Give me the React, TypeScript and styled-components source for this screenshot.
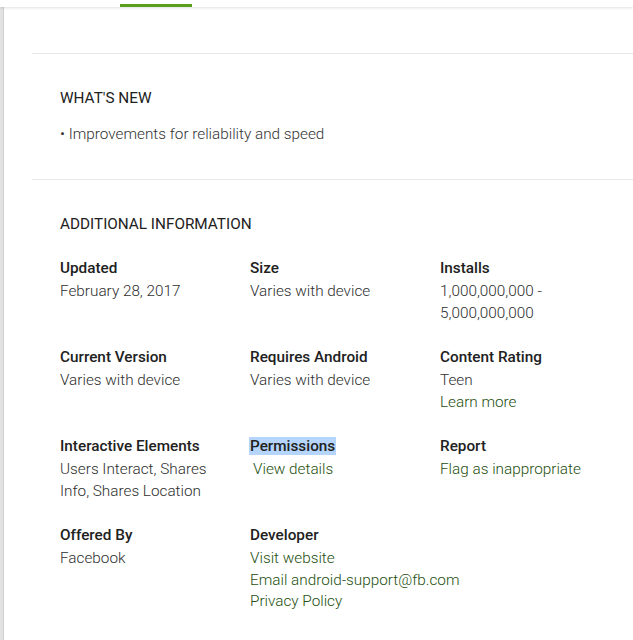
import React from "react";
import styled, { createGlobalStyle } from "styled-components";

const GlobalStyle = createGlobalStyle`
  html, body {
    margin: 0;
    padding: 0;
    background: #ffffff;
    font-family: Roboto, "Liberation Sans", Arial, sans-serif;
  }
`;

interface InfoValue {
  text: string;
  link?: boolean;
  indent?: boolean;
  nowrap?: boolean;
}

interface InfoItem {
  title: string;
  values: InfoValue[];
  highlight?: boolean;
}

const items: InfoItem[] = [
  { title: "Updated", values: [{ text: "February 28, 2017" }] },
  { title: "Size", values: [{ text: "Varies with device" }] },
  { title: "Installs", values: [{ text: "1,000,000,000 -" }, { text: "5,000,000,000" }] },
  { title: "Current Version", values: [{ text: "Varies with device" }] },
  { title: "Requires Android", values: [{ text: "Varies with device" }] },
  {
    title: "Content Rating",
    values: [{ text: "Teen" }, { text: "Learn more", link: true }],
  },
  {
    title: "Interactive Elements",
    values: [{ text: "Users Interact, Shares Info, Shares Location" }],
  },
  {
    title: "Permissions",
    highlight: true,
    values: [{ text: "View details", link: true, indent: true }],
  },
  { title: "Report", values: [{ text: "Flag as inappropriate", link: true }] },
  { title: "Offered By", values: [{ text: "Facebook" }] },
  {
    title: "Developer",
    values: [
      { text: "Visit website", link: true },
      { text: "Email android-support@fb.com", link: true, nowrap: true },
      { text: "Privacy Policy", link: true },
    ],
  },
];

const Page = styled.div`
  width: 633px;
  height: 640px;
  overflow: hidden;
  display: flex;
  flex-direction: column;
`;

const TopBar = styled.div`
  height: 7px;
  background: #ffffff;
  position: relative;
  z-index: 1;
  box-shadow: 0 1px 3px rgba(0, 0, 0, 0.12);
  display: flex;
  align-items: flex-end;
  padding-left: 120px;
  flex-shrink: 0;
`;

const TabIndicator = styled.div`
  width: 72px;
  height: 3px;
  background: #5a9e1d;
`;

const Body = styled.div`
  flex: 1;
  display: flex;
`;

const LeftRail = styled.div`
  width: 3px;
  background: #e2e2e2;
  border-right: 1px solid #cfcfcf;
  flex-shrink: 0;
`;

const Content = styled.div`
  flex: 1;
  padding-left: 28px;
`;

const Spacer = styled.div`
  height: 46px;
`;

const Section = styled.section<{ $top: number; $bottom: number }>`
  border-top: 1px solid #e8e8e8;
  padding: ${(p) => p.$top}px 0 ${(p) => p.$bottom}px 28px;
`;

const SectionTitle = styled.h2`
  margin: 0;
  font-size: 15.3px;
  font-weight: 400;
  line-height: 24px;
  color: #212121;
  text-transform: uppercase;
`;

const Bullet = styled.p`
  margin: 12px 0 0;
  font-size: 15.3px;
  font-weight: 300;
  line-height: 24px;
  color: #333333;
`;

const Grid = styled.div`
  margin-top: 20px;
  display: grid;
  grid-template-columns: repeat(3, 190px);
  row-gap: 21px;
`;

const Item = styled.div`
  display: flex;
  flex-direction: column;
  padding-right: 24px;
`;

const ItemTitle = styled.div`
  font-size: 15.3px;
  font-weight: 500;
  line-height: 24px;
  color: #212121;
`;

const Highlight = styled.span`
  background: #b5d5fc;
  padding: 0 1px;
  margin-left: -1px;
`;

const Values = styled.div`
  padding-top: 1px;
  display: flex;
  flex-direction: column;
`;

const ItemValue = styled.div<{ $link?: boolean; $indent?: boolean; $nowrap?: boolean }>`
  font-size: 15.3px;
  font-weight: 300;
  line-height: 21.5px;
  color: ${(p) => (p.$link ? "#244f10" : "#2e2e2e")};
  padding-left: ${(p) => (p.$indent ? "3px" : "0")};
  white-space: ${(p) => (p.$nowrap ? "nowrap" : "normal")};
`;

export default function App() {
  return (
    <Page>
      <GlobalStyle />
      <TopBar>
        <TabIndicator />
      </TopBar>
      <Body>
        <LeftRail />
        <Content>
          <Spacer />
          <Section $top={32} $bottom={33}>
            <SectionTitle>What's New</SectionTitle>
            <Bullet>• Improvements for reliability and speed</Bullet>
          </Section>
          <Section $top={32} $bottom={0}>
            <SectionTitle>Additional Information</SectionTitle>
            <Grid>
              {items.map((item) => (
                <Item key={item.title}>
                  <ItemTitle>
                    {item.highlight ? <Highlight>{item.title}</Highlight> : item.title}
                  </ItemTitle>
                  <Values>
                    {item.values.map((v) => (
                      <ItemValue
                        key={v.text}
                        $link={v.link}
                        $indent={v.indent}
                        $nowrap={v.nowrap}
                      >
                        {v.text}
                      </ItemValue>
                    ))}
                  </Values>
                </Item>
              ))}
            </Grid>
          </Section>
        </Content>
      </Body>
    </Page>
  );
}
